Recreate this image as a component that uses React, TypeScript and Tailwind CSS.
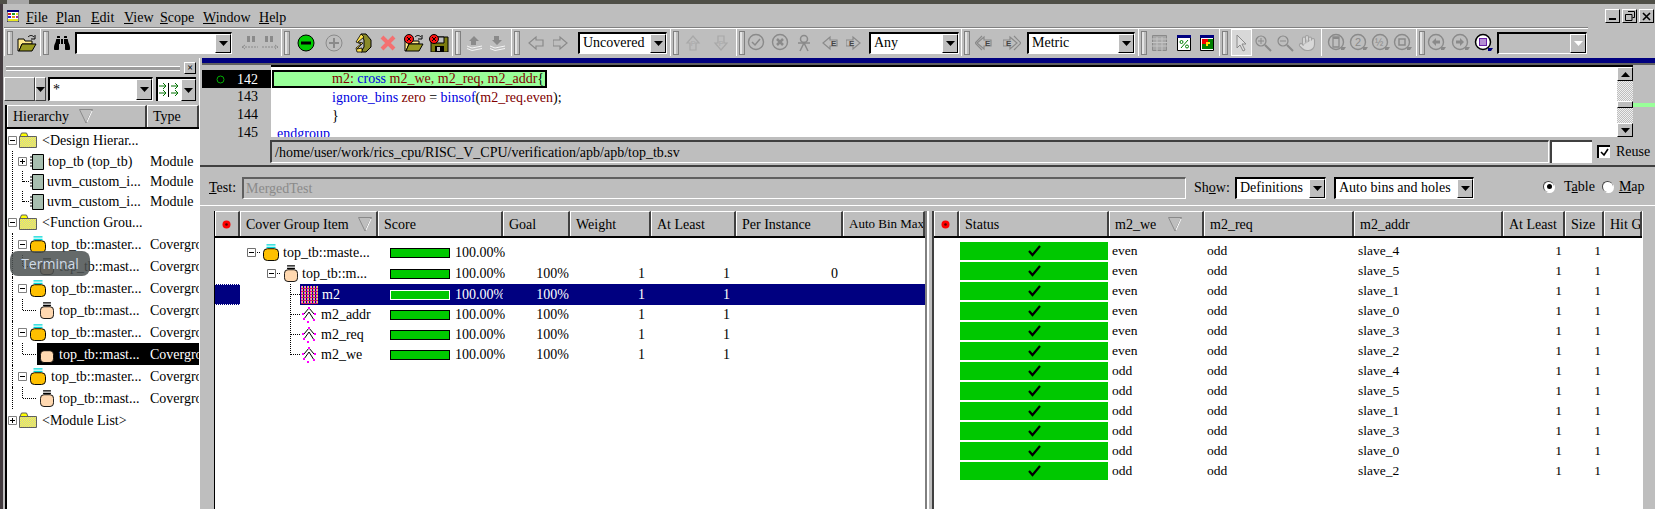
import { Hand } from 'lucide-react';
import type { ReactNode } from 'react';
import { FaBinoculars } from 'react-icons/fa';

const GRAY = '#8a8a8a';

function Grip() {
  return <span className="h-[24px] w-[6px] shrink-0 border border-x-[#808080] border-y-[#808080] bg-[#e4e4e4] shadow-[inset_-2px_0_0_#bebebe]" />;
}

function Group({ className, children }: { className: string; children: ReactNode }) {
  return <div className={`flex h-full shrink-0 items-center border-t border-l border-white pl-[2px] shadow-[0_-1px_0_#808080] ${className}`}>{children}</div>;
}

function Slot({ className = '', children }: { className?: string; children?: ReactNode }) {
  return <span className={`flex h-[24px] w-[22px] shrink-0 items-center justify-center ${className}`}>{children}</span>;
}

function DownArrow({ color = '#000' }: { color?: string }) {
  return (
    <svg width="9" height="5" viewBox="0 0 9 5">
      <path d="M0 0h9L4.500 5z" fill={color} />
    </svg>
  );
}

function Combo({ text = '', className, disabled = false }: { text?: string; className: string; disabled?: boolean }) {
  return (
    <div className={`flex h-[22px] shrink-0 items-center border-t-2 border-l-2 border-t-black border-l-black border-r border-b border-r-white border-b-white ${disabled ? 'bg-[#bebebe]' : 'bg-white'} ${className}`}>
      <span className="min-w-0 flex-1 truncate pl-[3px] leading-none">{text}</span>
      <span className="flex h-full w-[16px] shrink-0 items-center justify-center border border-t-white border-l-white border-r-black border-b-black bg-[#bebebe]">
        <DownArrow color={disabled ? '#fff' : '#000'} />
      </span>
    </div>
  );
}

function Menu({ label, className }: { label: string; className: string }) {
  return (
    <span className={`mt-[2px] ${className}`}>
      <span className="underline">{label[0]}</span>
      {label.slice(1)}
    </span>
  );
}

function Badge() {
  return (
    <g>
      <circle cx="5" cy="5" r="4.500" fill="#ff1010" stroke="#000" />
      <path d="M3 3l4 4M7 3l-4 4" stroke="#000" strokeWidth="1" />
    </g>
  );
}

function OpenFolder({ badge = false }: { badge?: boolean }) {
  return (
    <svg width="20" height="18" viewBox="0 0 20 18">
      <path d="M1 5h6l1 2h7v3H5l-3 7H1z" fill="#ffe98a" stroke="#000" />
      <path d="M2 17l3-7h14l-4 7z" fill="#9a9a20" stroke="#000" />
      <path d="M11 3c2-2 4-2 6 0" fill="none" stroke="#000" />
      <path d="M18 1v4h-4" fill="none" stroke="#000" />
      {badge && <Badge />}
    </svg>
  );
}

function Save() {
  return (
    <svg width="20" height="18" viewBox="0 0 20 18">
      <path d="M2 3h17v15H2z" fill="#7d7d10" stroke="#000" />
      <path d="M5 3h10v6H5z" fill="#bebebe" stroke="#000" />
      <path d="M6 12h9v6H6z" fill="#000" />
      <path d="M8 13h3v4H8z" fill="#bebebe" />
      <Badge />
    </svg>
  );
}

function Ring({ children, color = GRAY, tail = false }: { children?: ReactNode; color?: string; tail?: boolean }) {
  return (
    <svg width="20" height="20" viewBox="0 0 20 20">
      <circle cx="9" cy="9" r="7.500" fill="none" stroke={color} strokeWidth="1.400" />
      {children}
      {tail && <path d="M14 14h5l-2 3h-3z" fill={color} />}
    </svg>
  );
}

function Stack({ down = false }: { down?: boolean }) {
  return (
    <svg width="20" height="16" viewBox="0 0 20 16">
      <path d={down ? 'M7 1h5v4h3l-5 5-5-5h2z' : 'M10 1l5 5h-3v4H7V6H5z'} fill={GRAY} />
      <path d="M3 11l5 2 10-2M3 13.500l5 2 10-2" fill="none" stroke="#f4f4f4" />
    </svg>
  );
}

function BlockArrow({ dir, letter, color = GRAY, double = false }: { dir: 'l' | 'r' | 'u' | 'd'; letter?: string; color?: string; double?: boolean }) {
  const paths = {
    l: 'M9 2v3h7v6H9v3L2 8z',
    r: 'M7 2v3H0v6h7v3l7-6z',
    u: 'M8 1l6 7h-3v7H5V8H2z',
    d: 'M5 1h6v7h3l-6 7-6-7h3z',
  };
  return (
    <svg width="18" height="16" viewBox="0 0 18 16">
      <path d={paths[dir]} fill="none" stroke={color} strokeWidth="1.200" />
      {double && <path d={dir === 'l' ? 'M7 1L0 8l7 7' : 'M11 1l7 7-7 7'} fill="none" stroke={color} strokeWidth="1.200" />}
      {letter && <text x={dir === 'l' ? 10 : dir === 'r' ? 3 : 5.500} y="11" fontSize="8" fontWeight="700" fill={letter === 'E' ? '#444' : '#b0b0b0'} fontFamily="Liberation Sans">{letter}</text>}
    </svg>
  );
}

function Magnifier({ sign }: { sign: '+' | '-' }) {
  return (
    <svg width="18" height="18" viewBox="0 0 18 18">
      <circle cx="7" cy="7" r="5" fill="none" stroke={GRAY} strokeWidth="1.200" />
      <path d={sign === '+' ? 'M4 7h6M7 4v6' : 'M4 7h6'} stroke={GRAY} />
      <path d="M11 11l6 6" stroke={GRAY} strokeWidth="2" />
    </svg>
  );
}

function Head() {
  return (
    <svg width="18" height="20" viewBox="0 0 18 20">
      <path d="M7 1h5l5 6v7l-5 5H7l3-5V7z" fill="#8a8a28" stroke="#000" />
      <path d="M7 1l3 3-6 5 5 1-6 6 5-1 0 4H3l-1-4 5-4-5-2z" fill="#ffe24a" stroke="#000" strokeWidth="0.800" />
    </svg>
  );
}

function TableIcon() {
  return (
    <svg width="15" height="16" viewBox="0 0 15 16">
      <path d="M.5.5h14v15H.5z" fill="#a8a8a8" stroke={GRAY} />
      <path d="M0 4h15M0 7.500h15M0 11h15M5 2v14M10 2v14" stroke="#c4c4c4" />
    </svg>
  );
}

function WinPercent() {
  return (
    <svg width="15" height="16" viewBox="0 0 15 16">
      <path d="M.5.5h13v15H.5z" fill="#fff" stroke="#000" />
      <path d="M0 0h14v3H0z" fill="#000080" />
      <path d="M4 13l7-8" stroke="#008000" />
      <circle cx="4.500" cy="7" r="1.500" fill="none" stroke="#008000" />
      <circle cx="10" cy="11.500" r="1.500" fill="none" stroke="#008000" />
    </svg>
  );
}

function WinMap() {
  return (
    <svg width="15" height="16" viewBox="0 0 15 16">
      <path d="M.5.5h13v15H.5z" fill="#fff" stroke="#000" />
      <path d="M0 0h14v3H0z" fill="#000080" />
      <path d="M2 4h6v5H2z" fill="#f00000" />
      <path d="M8 4h5v5H8zM2 9h6v5H2z" fill="#008000" />
      <path d="M6 7h4v4H6z" fill="#ffe000" />
      <path d="M8 9h5v5H8z" fill="#008000" />
    </svg>
  );
}

function Toolbar() {
  return (
    <div className="ml-[1px] flex h-[30px] shrink-0 items-stretch pb-[2px]">
      <Group className="w-[36px]">
        <Grip />
        <Slot className="ml-[3px]"><OpenFolder /></Slot>
      </Group>
      <Group className="w-[241px]">
        <Grip />
        <Slot className="ml-[2px]"><FaBinoculars size={16} /></Slot>
        <Combo className="ml-[2px] w-[157px]" />
        <span className="ml-[9px] flex h-[24px] w-[20px] shrink-0 items-center justify-center"><svg width="18" height="16" viewBox="0 0 18 16"><path d="M5 1h3v6H5zM10 1h3v6h-3z" fill={GRAY} /><path d="M0 12h16M3 10l-3 2 3 2" fill="none" stroke={GRAY} strokeDasharray="2 1" /></svg></span>
        <span className="flex h-[24px] w-[20px] shrink-0 items-center justify-center"><svg width="18" height="16" viewBox="0 0 18 16"><path d="M3 1h3v6H3zM8 1h3v6H8z" fill={GRAY} /><path d="M0 12h16M13 10l3 2-3 2" fill="none" stroke={GRAY} strokeDasharray="2 1" /></svg></span>
      </Group>
      <Group className="w-[171px]">
        <Grip />
        <Slot className="ml-[5px]">
          <svg width="18" height="18" viewBox="0 0 18 18"><circle cx="9" cy="9" r="8" fill="#00cc00" stroke="#000" /><path d="M4 7.500h10v3H4z" fill="#000" /></svg>
        </Slot>
        <Slot className="ml-[6px]"><svg width="18" height="18" viewBox="0 0 18 18"><circle cx="9" cy="9" r="8" fill="none" stroke={GRAY} /><path d="M4 9h10M9 4v10" stroke={GRAY} strokeWidth="2" /></svg></Slot>
        <Slot className="ml-[7px]"><Head /></Slot>
        <Slot className="ml-[3px]"><svg width="18" height="18" viewBox="0 0 18 18"><path d="M3 3l12 12M15 3L3 15" stroke="#f47070" strokeWidth="4" /></svg></Slot>
        <Slot className="ml-[4px]"><OpenFolder badge /></Slot>
        <Slot className="ml-[3px]"><Save /></Slot>
      </Group>
      <Group className="w-[59px]">
        <Grip />
        <Slot className="ml-[2px]"><Stack /></Slot>
        <Slot className="ml-[1px]"><Stack down /></Slot>
      </Group>
      <Group className="w-[159px]">
        <Grip />
        <Slot className="ml-[5px]"><BlockArrow dir="l" /></Slot>
        <Slot className="ml-[4px]"><BlockArrow dir="r" /></Slot>
        <Combo text="Uncovered" className="ml-[5px] w-[89px]" />
      </Group>
      <Group className="w-[66px]">
        <Grip />
        <Slot className="ml-[4px]"><BlockArrow dir="u" letter="P" color="#a8a8a8" /></Slot>
        <Slot className="ml-[6px]"><BlockArrow dir="d" letter="P" color="#a8a8a8" /></Slot>
      </Group>
      <Group className="w-[225px]">
        <Grip />
        <Slot className="ml-[1px]"><Ring><path d="M5 9l3 3 5-6" fill="none" stroke={GRAY} strokeWidth="1.500" /></Ring></Slot>
        <Slot className="ml-[2px]"><Ring><path d="M6 6l6 6M12 6l-6 6" stroke={GRAY} strokeWidth="2.500" /></Ring></Slot>
        <Slot className="ml-[1px]"><svg width="16" height="18" viewBox="0 0 16 18"><circle cx="8" cy="5" r="3.500" fill="none" stroke={GRAY} strokeWidth="1.500" /><path d="M2 9h12M4 17l4-8 4 8" fill="none" stroke={GRAY} strokeWidth="1.500" /></svg></Slot>
        <Slot className="ml-[4px]"><BlockArrow dir="l" letter="E" /></Slot>
        <Slot className="ml-[3px]"><BlockArrow dir="r" letter="E" /></Slot>
        <Combo text="Any" className="ml-[3px] w-[90px]" />
      </Group>
      <Group className="w-[177px]">
        <Grip />
        <Slot className="ml-[3px]"><BlockArrow dir="l" letter="E" double /></Slot>
        <Slot className="ml-[6px]"><BlockArrow dir="r" letter="E" double /></Slot>
        <Combo text="Metric" className="ml-[4px] w-[108px]" />
      </Group>
      <Group className="w-[81px]">
        <Grip />
        <Slot className="ml-[1px]"><TableIcon /></Slot>
        <Slot className="ml-[3px]"><WinPercent /></Slot>
        <Slot className="ml-[1px]"><WinMap /></Slot>
      </Group>
      <Group className="w-[102px]">
        <Grip />
        <span className="ml-[3px] flex h-[27px] w-[21px] shrink-0 items-center justify-center border border-white bg-[#d8d8d8]">
          <svg width="12" height="18" viewBox="0 0 12 18"><path d="M1 1v13l3-3 3 6 2-1-3-6h4z" fill="#e0e0e0" stroke={GRAY} /></svg>
        </span>
        <Slot><Magnifier sign="+" /></Slot>
        <Slot><Magnifier sign="-" /></Slot>
        <Slot><Hand size={18} color="#a0a0a0" fill="#d8d8d8" strokeWidth={1.500} /></Slot>
      </Group>
      <Group className="w-[95px]">
        <Slot className="ml-[2px]"><Ring tail><path d="M6 4h6v10H6z" fill="none" stroke={GRAY} strokeWidth="1.300" /><path d="M6 4h6v2H6z" fill={GRAY} /></Ring></Slot>
        <Slot><Ring tail><text x="6" y="13" fontSize="11" fill={GRAY} fontFamily="Liberation Sans">2</text></Ring></Slot>
        <Slot><Ring tail><text x="4" y="13" fontSize="10" fill={GRAY} fontFamily="Liberation Sans">½</text></Ring></Slot>
        <Slot><Ring tail><path d="M6 6h6v6H6z" fill="none" stroke={GRAY} strokeWidth="1.500" /></Ring></Slot>
      </Group>
      <Group className="w-[172px]">
        <Grip />
        <Slot className="ml-[1px]"><Ring tail><path d="M13 7.500H9V5L5 9l4 4v-2.500h4z" fill={GRAY} /></Ring></Slot>
        <Slot className="ml-[2px]"><Ring tail><path d="M5 7.500h4V5l4 4-4 4v-2.500H5z" fill={GRAY} /></Ring></Slot>
        <Slot className="ml-[1px]">
          <svg width="20" height="20" viewBox="0 0 20 20"><circle cx="9" cy="9" r="7.500" fill="#fff" stroke="#000" strokeWidth="1.500" /><path d="M5 5h8v8H5z" fill="#6a20a8" /><path d="M6 7h6M6 9h6M6 11h6" stroke="#fff" /><path d="M14 15h5l-2 3h-3z" fill="#000080" /></svg>
        </Slot>
        <Combo disabled className="ml-[2px] w-[90px]" />
      </Group>
    </div>
  );
}

function Expander({ open = true, gray = false }: { open?: boolean; gray?: boolean }) {
  return (
    <svg width="9" height="9" viewBox="0 0 9 9" className="shrink-0">
      <path d="M.5.500h8v8h-8z" fill="#fff" stroke={gray ? '#707070' : '#808080'} />
      <path d={open ? 'M2 4.500h5' : 'M2 4.500h5M4.500 2v5'} stroke="#000" />
    </svg>
  );
}

function Folder() {
  return (
    <svg width="18" height="16" viewBox="0 0 18 16" className="shrink-0">
      <defs>
        <pattern id="dither" width="2" height="2" patternUnits="userSpaceOnUse">
          <path d="M0 0h2v2H0z" fill="#ffff40" />
          <path d="M0 0h1v1H0zM1 1h1v1H1z" fill="#c8c8a0" />
        </pattern>
      </defs>
      <path d="M.5 4.500h17v11H.5z" fill="url(#dither)" stroke="#606060" />
      <path d="M1 4.500L2.500 1h5L9 4.500z" fill="#ffff00" stroke="#606060" />
    </svg>
  );
}

function Jar({ gold = false, size = 'w-[16px]' }: { gold?: boolean; size?: string }) {
  return (
    <svg viewBox="0 0 16 18" preserveAspectRatio="none" className={`h-[17px] shrink-0 ${size}`}>
      <path d="M3.500 1h9M3.500 3.500h9" stroke={gold ? '#00d8d8' : '#000'} strokeWidth="1.300" />
      <rect x=".5" y="5" width="15" height="12.500" rx="4" fill={gold ? '#ffc000' : '#ffd8b0'} stroke="#000" />
    </svg>
  );
}

function Chip() {
  return (
    <svg width="14" height="16" viewBox="0 0 14 16" className="shrink-0">
      <path d="M2.500.5h11v15h-11z" fill="#a8bfb0" stroke="#000" />
      <path d="M0 3h2M0 6h2M0 9h2M0 12h2" stroke="#000" />
    </svg>
  );
}

function Dots() {
  return (
    <span className="h-full w-[11px] shrink-0 pl-[5px]">
      <span className="block h-full border-l border-dotted border-black" />
    </span>
  );
}

function Dash({ w }: { w: string }) {
  return <span className={`shrink-0 border-t border-dotted border-black ${w}`} />;
}

function TreeRow({ children, type, tall = true, selected = false }: { children: ReactNode; type?: string; tall?: boolean; selected?: boolean }) {
  return (
    <div className={`grid grid-cols-[143px_1fr] items-center overflow-hidden whitespace-nowrap ${tall ? 'h-[22px]' : 'h-[20px]'}`}>
      <div className="flex h-full min-w-0 items-center">{children}</div>
      <div className={`flex h-full items-center overflow-hidden ${selected ? 'bg-black text-white' : ''}`}>{type}</div>
    </div>
  );
}

function GroupRow({ label }: { label: string }) {
  return (
    <TreeRow type="Covergroup">
      <Dots />
      <Expander />
      <span className="ml-[3px]"><Jar gold /></span>
      <span className="ml-[5px]">{label}</span>
    </TreeRow>
  );
}

function ChildRow({ selected = false }: { selected?: boolean }) {
  return (
    <TreeRow type="Covergroup" selected={selected}>
      <Dots />
      <span className="ml-[4px] h-[11px] w-[1px] shrink-0 self-start border-l border-dotted border-black" />
      <span className="w-[13px] shrink-0 border-t border-dotted border-black" />
      {selected ? (
        <span className="ml-[1px] flex h-full flex-1 items-center bg-black pl-[3px] text-white">
          <Jar size="w-[14px]" />
          <span className="ml-[5px]">top_tb::mast...</span>
        </span>
      ) : (
        <>
          <span className="ml-[4px]"><Jar size="w-[14px]" /></span>
          <span className="ml-[5px]">top_tb::mast...</span>
        </>
      )}
    </TreeRow>
  );
}

function Head1({ label, sort = false, className = '' }: { label?: ReactNode; sort?: boolean; className?: string }) {
  return (
    <div className={`flex h-full items-center overflow-hidden whitespace-nowrap border-t border-l border-white border-r-2 border-r-[#404040] bg-[#bebebe] pl-[5px] ${className}`}>
      {label}
      {sort && (
        <svg width="14" height="15" viewBox="0 0 14 15" className="mr-[4px] ml-auto shrink-0">
          <path d="M.5.500h13L7 14z" fill="none" stroke="#8a8a8a" />
          <path d="M8 13l5-11" stroke="#fff" />
        </svg>
      )}
    </div>
  );
}

function LeftPanel() {
  return (
    <div className="flex h-full w-[197px] shrink-0 flex-col border-r border-white">
      <div className="flex h-[19px] shrink-0 items-center pt-[1px] pl-[3px]">
        <span className="h-[5px] w-[174px] border-y border-white bg-[#9c9c9c]" />
        <span className="ml-[4px] flex h-[12px] w-[12px] items-center justify-center border border-t-white border-l-white border-r-black border-b-black text-[10px] leading-none font-bold">×</span>
      </div>
      <div className="flex h-[24px] shrink-0 items-center pl-[1px]">
        <span className="h-full w-[31px] border border-t-white border-l-white border-r-[#404040] border-b-[#404040]" />
        <span className="flex h-full w-[11px] items-center justify-center border border-t-white border-l-white border-r-[#404040] border-b-[#404040]"><DownArrow /></span>
        <Combo text="*" className="ml-[2px] h-[24px] w-[105px]" />
        <div className="ml-[3px] flex h-[24px] w-[40px] items-center border-t-2 border-l-2 border-t-black border-l-black bg-white">
          <svg width="22" height="14" viewBox="0 0 22 14" className="shrink-0">
            <path d="M1 3h7M5 0l3 3-3 3M1 10h7M5 7l3 3-3 3M13 3h7M17 0l3 3-3 3M13 10h7M17 7l3 3-3 3" fill="none" stroke="#007000" />
            <path d="M10.500 0v14" stroke="#000" />
          </svg>
          <span className="ml-auto flex h-full w-[15px] items-center justify-center border border-t-white border-l-white border-r-black border-b-black bg-[#bebebe]"><DownArrow /></span>
        </div>
      </div>
      <div className="mt-[4px] ml-[2px] flex min-h-0 flex-1 flex-col border-l-2 border-black bg-white">
        <div className="grid h-[24px] shrink-0 grid-cols-[140px_1fr] border-b-2 border-black bg-[#bebebe]">
          <Head1 label="Hierarchy" sort className="pr-[48px]" />
          <Head1 label="Type" />
        </div>
        <div className="flex flex-col">
          <TreeRow>
            <span className="ml-[1px]"><Expander /></span>
            <span className="ml-[2px]"><Folder /></span>
            <span className="ml-[5px]">&lt;Design Hierar...</span>
          </TreeRow>
          <TreeRow type="Module" tall={false}>
            <Dots />
            <Expander open={false} />
            <span className="ml-[3px]"><Chip /></span>
            <span className="ml-[4px]">top_tb (top_tb)</span>
          </TreeRow>
          {[0, 1].map((i) => (
            <TreeRow key={i} type="Module" tall={false}>
              <Dots />
              <span className="ml-[4px] h-[11px] shrink-0 self-start border-l border-dotted border-black" />
              <Dash w="w-[6px]" />
              <span className="ml-[1px]"><Chip /></span>
              <span className="ml-[3px]">uvm_custom_i...</span>
            </TreeRow>
          ))}
          <TreeRow>
            <span className="ml-[1px]"><Expander /></span>
            <span className="ml-[2px]"><Folder /></span>
            <span className="ml-[5px]">&lt;Function Grou...</span>
          </TreeRow>
          <GroupRow label="top_tb::master..." />
          <ChildRow />
          <GroupRow label="top_tb::master..." />
          <ChildRow />
          <GroupRow label="top_tb::master..." />
          <ChildRow selected />
          <GroupRow label="top_tb::master..." />
          <ChildRow />
          <TreeRow>
            <span className="ml-[1px]"><Expander open={false} /></span>
            <span className="ml-[2px]"><Folder /></span>
            <span className="ml-[5px]">&lt;Module List&gt;</span>
          </TreeRow>
        </div>
      </div>
    </div>
  );
}

function Editor() {
  return (
    <div className="flex h-[72px] shrink-0">
      <div className="ml-[2px] flex w-[69px] shrink-0 flex-col pt-[5px] text-right">
        <div className="flex h-[18px] items-center bg-black pr-[13px] text-white">
          <svg width="9" height="9" viewBox="0 0 9 9" className="mr-auto ml-[14px]"><circle cx="4.500" cy="4.500" r="3.500" fill="none" stroke="#00b000" /></svg>
          142
        </div>
        <div className="h-[18px] pr-[13px] leading-[18px]">143</div>
        <div className="h-[18px] pr-[13px] leading-[18px]">144</div>
        <div className="h-[13px] overflow-hidden pr-[13px] leading-[18px]">145</div>
      </div>
      <div className="min-w-0 flex-1 overflow-hidden border-t-2 border-black bg-white pt-[3px] whitespace-pre">
        <div className="ml-[1px] h-[18px] w-[275px] border-2 border-black bg-[#99ff99] pl-[58px] leading-[14px] text-[#800000]">
          m2: <span className="text-[#0000e0]">cross</span> m2_we, m2_req, m2_addr<span className="text-black">{'{'}</span>
        </div>
        <div className="h-[18px] pl-[61px] leading-[19px]">
          <span className="text-[#0000e0]">ignore_bins</span> <span className="text-[#800000]">zero</span> = <span className="text-[#0000e0]">binsof</span>(<span className="text-[#800000]">m2_req.even</span>);
        </div>
        <div className="h-[18px] pl-[61px] leading-[19px]">{'}'}</div>
        <div className="pl-[6px] leading-[20px] text-[#0000e0]">endgroup</div>
      </div>
      <div className="flex w-[16px] shrink-0 flex-col border-t-2 border-black bg-[repeating-conic-gradient(#bebebe_0_25%,#f0f0f0_0_50%)] bg-[length:2px_2px]">
        <span className="flex h-[14px] items-center justify-center border border-t-white border-l-white border-r-black border-b-black bg-[#bebebe]"><svg width="9" height="5" viewBox="0 0 9 5"><path d="M0 5h9L4.500 0z" /></svg></span>
        <span className="mt-[20px] h-[7px] border border-t-white border-l-white border-r-black border-b-black bg-[#bebebe]" />
        <span className="mt-auto flex h-[14px] items-center justify-center border border-t-white border-l-white border-r-black border-b-black bg-[#bebebe]"><DownArrow /></span>
      </div>
      <div className="w-[22px] shrink-0 pt-[38px]">
        <div className="h-[4px] bg-[#99ff99]" />
      </div>
    </div>
  );
}

function PathRow() {
  return (
    <div className="flex h-[28px] shrink-0 items-center pt-[1px] pl-[70px]">
      <div className="flex h-[23px] w-[1279px] items-center border-t-2 border-l-2 border-t-[#404040] border-l-[#404040] border-r border-b border-r-white border-b-white pl-[3px]">/home/user/work/rics_cpu/RISC_V_CPU/verification/apb/apb/top_tb.sv</div>
      <div className="ml-[1px] h-[23px] w-[42px] border-t-2 border-l-2 border-t-[#404040] border-l-[#404040] bg-white" />
      <span className="ml-[5px] flex h-[13px] w-[13px] items-center justify-center border-t-2 border-l-2 border-t-black border-l-black bg-white">
        <svg width="9" height="9" viewBox="0 0 9 9"><path d="M1 4l3 3 4-6" fill="none" stroke="#000" strokeWidth="1.600" /></svg>
      </span>
      <span className="ml-[6px]">Reuse</span>
    </div>
  );
}

function Radio({ on = false }: { on?: boolean }) {
  return (
    <span className="flex h-[11px] w-[11px] shrink-0 items-center justify-center rounded-full border-t border-l border-[#404040] bg-white shadow-[1px_1px_0_#fff]">
      {on && <span className="h-[5px] w-[5px] rounded-full bg-black" />}
    </span>
  );
}

function TestRow() {
  return (
    <div className="flex h-[41px] shrink-0 items-center border-t-2 border-b border-t-[#404040] border-b-white pt-[3px] pl-[9px]">
      <span className="w-[33px] shrink-0"><span className="underline">T</span>est:</span>
      <div className="flex h-[22px] w-[944px] shrink-0 items-center border-t-2 border-l-2 border-t-[#606060] border-l-[#606060] border-r border-b border-r-white border-b-white pl-[2px] text-[#8a8a8a]">MergedTest</div>
      <span className="ml-[8px] w-[41px] shrink-0">Sh<span className="underline">o</span>w:</span>
      <Combo text="Definitions" className="w-[91px]" />
      <Combo text="Auto bins and holes" className="ml-[8px] w-[140px]" />
      <span className="ml-[69px] -mt-[3px] flex items-center">
        <Radio on />
        <span className="ml-[10px]">T<span className="underline">a</span>ble</span>
      </span>
      <span className="ml-[7px] -mt-[3px] flex items-center">
        <Radio />
        <span className="ml-[6px]"><span className="underline">M</span>ap</span>
      </span>
    </div>
  );
}

function Bar({ selected = false }: { selected?: boolean }) {
  return (
    <span className={`h-[10px] w-[60px] shrink-0 border bg-[#00c800] ${selected ? 'border-white' : 'border-black'}`} />
  );
}

function Stick() {
  return (
    <svg width="16" height="16" viewBox="0 0 16 16" className="shrink-0">
      <path d="M8 1L3 7M8 1l5 6M8 5L13 13M8 5L3 12" fill="none" stroke="#000" />
      <path d="M7 0h2v2H7zM1 6h2v2H1zM2 11h2v2H2zM6 14h2v2H6zM12 12h2v2h-2zM13 6h2v2h-2z" fill="#ff00ff" />
    </svg>
  );
}

function Cross() {
  return (
    <svg width="17" height="18" viewBox="0 0 17 18" className="shrink-0">
      <defs>
        <pattern id="xpat" width="3" height="3" patternUnits="userSpaceOnUse">
          <path d="M0 0h3v3H0z" fill="#000080" />
          <path d="M0 0h1v3H0z" fill="#ff40ff" />
          <path d="M1 0h1v3H1z" fill="#e0e040" />
          <path d="M0 2h3v1H0z" fill="#c02060" />
        </pattern>
      </defs>
      <path d="M0 0h17v18H0z" fill="url(#xpat)" />
    </svg>
  );
}

function CoverRow({ indent, icon, label, goal, weight, least, inst, selected = false, tall = false }: { indent: ReactNode; icon?: ReactNode; label: string; goal?: string; weight?: string; least?: string; inst?: string; selected?: boolean; tall?: boolean }) {
  return (
    <div className={`grid grid-cols-[25px_138px_125px_67px_81px_85px_107px_82px] items-center whitespace-nowrap ${tall ? 'h-[21px]' : 'h-[20px]'} ${selected ? 'text-white' : ''}`}>
      <span className={`h-full ${selected ? 'border-y border-dotted border-white bg-[#000080]' : ''}`} />
      <span className="flex h-full items-center overflow-hidden">
        {indent}
        <span className={`flex h-full flex-1 items-center ${selected ? 'bg-[#000080]' : ''}`}>
          {icon}
          <span className={icon ? 'ml-[4px]' : ''}>{label}</span>
        </span>
      </span>
      <span className={`flex h-full items-center pl-[12px] ${selected ? 'bg-[#000080]' : ''}`}>
        <Bar selected={selected} />
        <span className="ml-[5px]">100.00%</span>
      </span>
      <span className={`flex h-full items-center justify-end pr-[1px] ${selected ? 'bg-[#000080]' : ''}`}>{goal}</span>
      <span className={`flex h-full items-center justify-end pr-[6px] ${selected ? 'bg-[#000080]' : ''}`}>{weight}</span>
      <span className={`flex h-full items-center justify-end pr-[6px] ${selected ? 'bg-[#000080]' : ''}`}>{least}</span>
      <span className={`flex h-full items-center justify-end pr-[5px] ${selected ? 'bg-[#000080]' : ''}`}>{inst}</span>
      <span className={`h-full ${selected ? 'bg-[#000080]' : ''}`} />
    </div>
  );
}

function LeftTable() {
  return (
    <div className="flex h-full w-[710px] shrink-0 flex-col bg-white">
      <div className="grid h-[27px] shrink-0 grid-cols-[25px_138px_125px_67px_81px_85px_107px_82px] border-b-2 border-black bg-[#bebebe]">
        <Head1 label={<svg width="9" height="9" viewBox="0 0 9 9" className="ml-[1px]"><circle cx="4.500" cy="4.500" r="4" fill="#ff0000" /><circle cx="4.500" cy="4.500" r="1.300" fill="#500" /></svg>} />
        <Head1 label="Cover Group Item" sort />
        <Head1 label="Score" />
        <Head1 label="Goal" />
        <Head1 label="Weight" />
        <Head1 label="At Least" />
        <Head1 label="Per Instance" />
        <Head1 label="Auto Bin Max" className="text-[13px]" />
      </div>
      <div className="flex flex-col pt-[4px]">
        <CoverRow
          tall
          indent={<span className="ml-[7px] flex items-center"><Expander gray /><Dash w="ml-[1px] w-[3px]" /></span>}
          icon={<span className="ml-[3px]"><Jar gold /></span>}
          label="top_tb::maste..."
        />
        <CoverRow
          tall
          indent={<span className="ml-[27px] flex items-center"><Expander gray /><Dash w="ml-[1px] w-[3px]" /></span>}
          icon={<span className="ml-[4px]"><Jar size="w-[14px]" /></span>}
          label="top_tb::m..."
          goal="100%"
          weight="1"
          least="1"
          inst="0"
        />
        <CoverRow
          selected
          indent={<span className="ml-[50px] flex h-full w-[10px] shrink-0 items-center border-l border-dotted border-black"><Dash w="w-[9px]" /></span>}
          icon={<span className="ml-[1px]"><Cross /></span>}
          label="m2"
          goal="100%"
          weight="1"
          least="1"
        />
        {['m2_addr', 'm2_req', 'm2_we'].map((name, i) => (
          <CoverRow
            key={name}
            indent={
              <span className={`ml-[50px] flex w-[10px] shrink-0 items-center border-l border-dotted border-black ${i === 2 ? 'h-[11px] self-start items-end' : 'h-full'}`}>
                <Dash w="w-[9px]" />
              </span>
            }
            icon={<span className="ml-[1px]"><Stick /></span>}
            label={name}
            goal="100%"
            weight="1"
            least="1"
          />
        ))}
      </div>
    </div>
  );
}

const BINS = [
  ['even', 'slave_4'],
  ['even', 'slave_5'],
  ['even', 'slave_1'],
  ['even', 'slave_0'],
  ['even', 'slave_3'],
  ['even', 'slave_2'],
  ['odd', 'slave_4'],
  ['odd', 'slave_5'],
  ['odd', 'slave_1'],
  ['odd', 'slave_3'],
  ['odd', 'slave_0'],
  ['odd', 'slave_2'],
];

function RightTable() {
  return (
    <div className="flex h-full w-[708px] shrink-0 flex-col bg-white">
      <div className="grid h-[27px] shrink-0 grid-cols-[25px_150px_95px_150px_149px_62px_39px_38px] border-b-2 border-black bg-[#bebebe]">
        <Head1 label={<svg width="9" height="9" viewBox="0 0 9 9" className="ml-[1px]"><circle cx="4.500" cy="4.500" r="4" fill="#ff0000" /><circle cx="4.500" cy="4.500" r="1.300" fill="#500" /></svg>} />
        <Head1 label="Status" />
        <Head1 label="m2_we" sort className="pr-[16px]" />
        <Head1 label="m2_req" />
        <Head1 label="m2_addr" />
        <Head1 label="At Least" />
        <Head1 label="Size" />
        <Head1 label="Hit Goal" />
      </div>
      <div className="flex flex-col pt-[3px] text-[13.500px]">
        {BINS.map(([we, addr], i) => (
          <div key={i} className="grid h-[20px] grid-cols-[25px_150px_95px_150px_149px_62px_39px_38px] items-center">
            <span />
            <span className="mr-[1px] ml-[1px] flex h-[18px] items-center justify-center bg-[#00c800]">
              <svg width="13" height="12" viewBox="0 0 13 12"><path d="M1 6l3.500 4L12 1" fill="none" stroke="#000" strokeWidth="2.200" /></svg>
            </span>
            <span className="pl-[3px]">{we}</span>
            <span className="pl-[3px]">odd</span>
            <span className="pl-[4px]">{addr}</span>
            <span className="pr-[3px] text-right">1</span>
            <span className="pr-[3px] text-right">1</span>
            <span />
          </div>
        ))}
      </div>
    </div>
  );
}

export default function App() {
  return (
    <div className="relative flex h-[509px] w-[1655px] flex-col overflow-hidden bg-[#bebebe] font-['Liberation_Serif',serif] text-[14px] text-black">
      <div className="h-[4px] shrink-0 bg-[#4f4f47] pl-[7px]">
        <div className="h-full w-[22px] bg-[#a8a8a8]" />
      </div>
      <div className="flex min-h-0 flex-1">
        <div className="w-[3px] shrink-0 bg-[#443c40]" />
        <div className="flex min-w-0 flex-1 flex-col">
          <div className="flex h-[24px] shrink-0 items-center pl-[4px]">
            <svg width="12" height="12" viewBox="0 0 12 12" className="shrink-0">
              <path d="M0 0h12v12H0z" fill="#fff" stroke="#000" />
              <path d="M0 0h12v2H0z" fill="#000080" />
              <path d="M1 3h3v2H1z" fill="#e02020" />
              <path d="M5 3h3v2H5z" fill="#20a020" />
              <path d="M9 3h2v2H9z" fill="#e0e020" />
              <path d="M1 6h3v2H1z" fill="#2020e0" />
              <path d="M5 6h3v2H5z" fill="#e09020" />
              <path d="M9 6h2v2H9z" fill="#a020a0" />
              <path d="M1 9h10v2H1z" fill="#e8e820" />
            </svg>
            <Menu label="File" className="ml-[7px] w-[30px]" />
            <Menu label="Plan" className="w-[35px]" />
            <Menu label="Edit" className="w-[33px]" />
            <Menu label="View" className="w-[36px]" />
            <Menu label="Scope" className="w-[43px]" />
            <Menu label="Window" className="w-[56px]" />
            <Menu label="Help" className="" />
            <div className="mr-[1px] ml-auto flex items-center gap-[2px]">
              <span className="flex h-[14px] w-[15px] items-end justify-center border border-t-white border-l-white border-r-black border-b-black pb-[2px]"><span className="h-[2px] w-[7px] bg-black" /></span>
              <span className="flex h-[14px] w-[15px] items-center justify-center border border-t-white border-l-white border-r-black border-b-black">
                <svg width="10" height="10" viewBox="0 0 10 10"><path d="M3 .5h6.500v6H7.500M.5 3.500h6.500v6H.5z" fill="none" stroke="#000" /></svg>
              </span>
              <span className="flex h-[14px] w-[15px] items-center justify-center border border-t-white border-l-white border-r-black border-b-black">
                <svg width="9" height="9" viewBox="0 0 9 9"><path d="M1 1l7 7M8 1L1 8" stroke="#000" strokeWidth="1.600" /></svg>
              </span>
            </div>
          </div>
          <Toolbar />
          <div className="flex min-h-0 flex-1">
            <LeftPanel />
            <div className="flex min-w-0 flex-1 flex-col">
              <div className="ml-[2px] h-[5px] shrink-0 bg-[#00007f]" />
              <div className="ml-[2px] h-[2px] shrink-0 bg-[#606060]" />
              <Editor />
              <PathRow />
              <TestRow />
              <div className="flex min-h-0 flex-1 pt-[5px] pl-[14px]">
                <div className="flex h-full border-l border-black">
                  <LeftTable />
                  <div className="h-full w-[9px] shrink-0 border-r-2 border-l-2 border-r-[#404040] border-l-[#808080] bg-[#bebebe] shadow-[inset_2px_0_0_#fff]" />
                  <RightTable />
                  <div className="h-full w-[1px] shrink-0 bg-white" />
                </div>
              </div>
            </div>
          </div>
        </div>
      </div>
      <div className="absolute top-[251px] left-[10px] flex h-[25px] w-[80px] items-center justify-center rounded-lg bg-[#4a5050]/85 font-['Open_Sans',sans-serif] text-[14px] text-[#cfdbe8]">Terminal</div>
    </div>
  );
}
